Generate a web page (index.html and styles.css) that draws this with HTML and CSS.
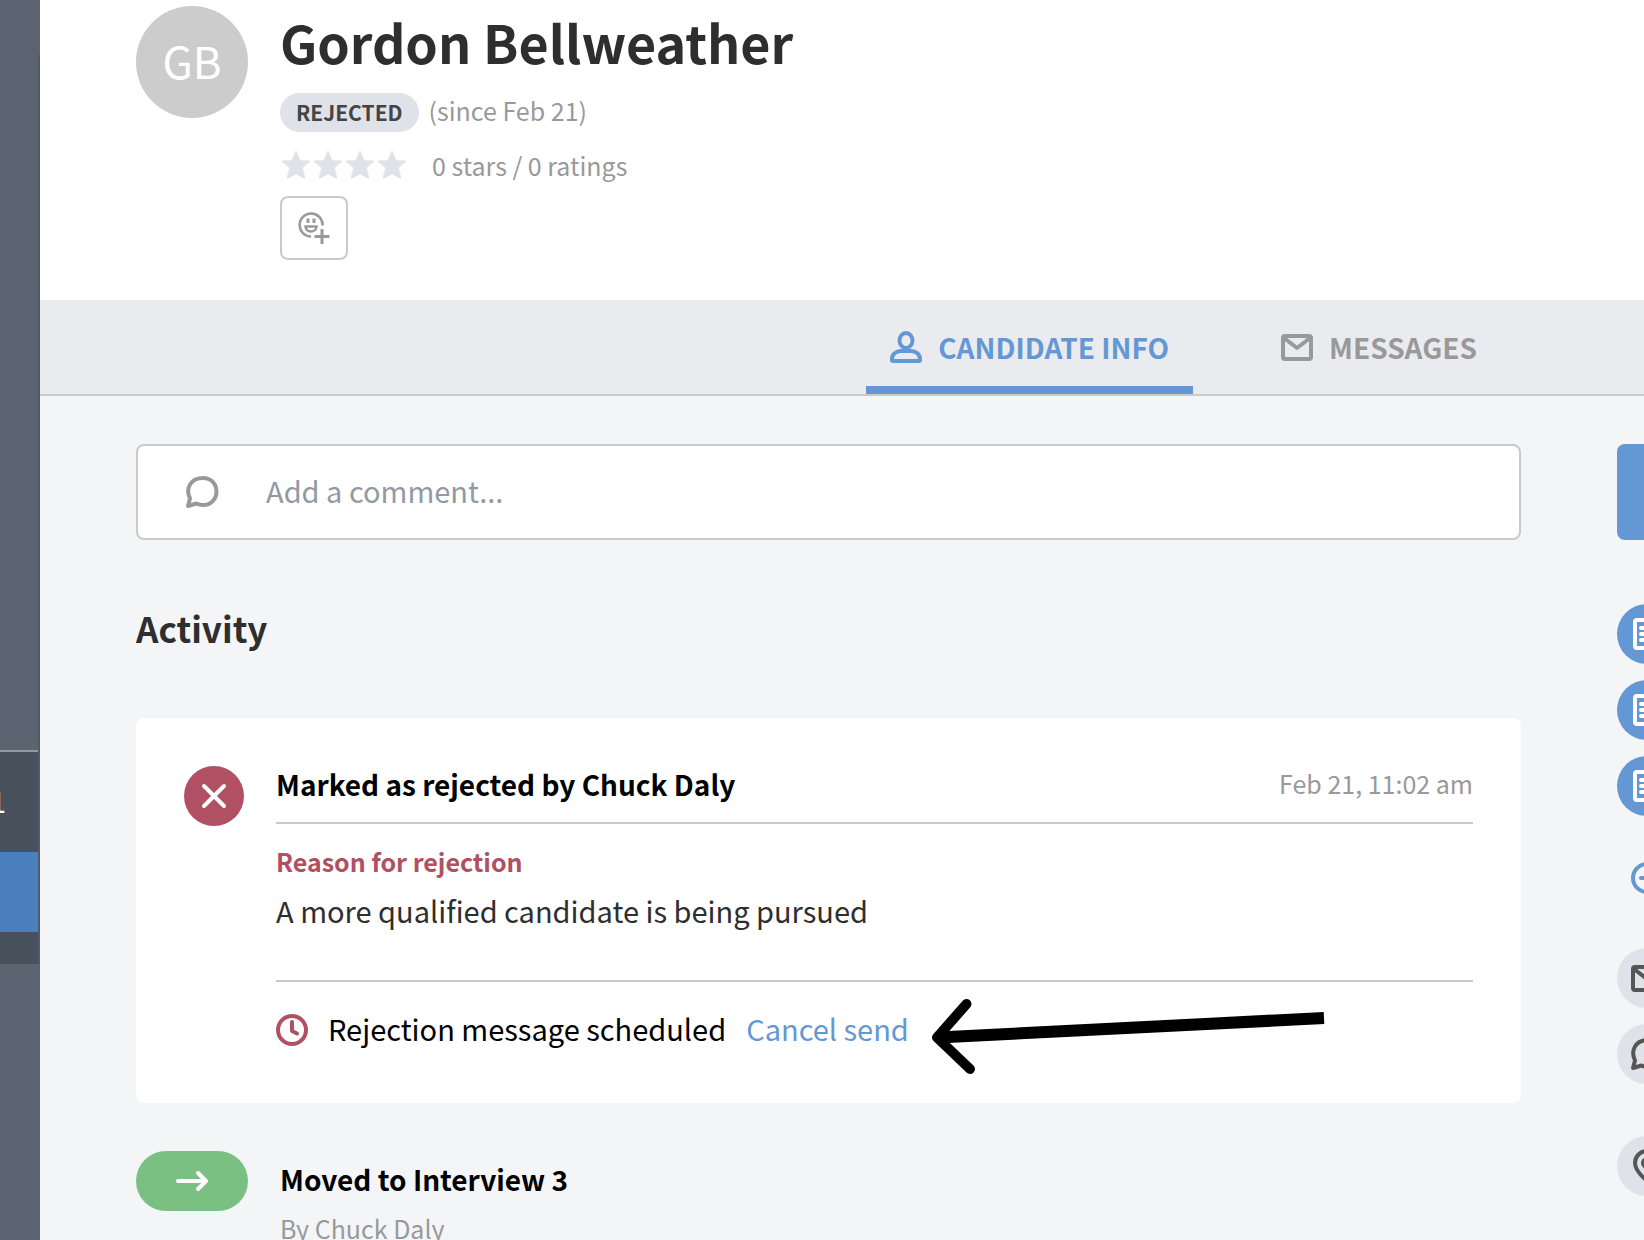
FILE: index.html
```html
<!DOCTYPE html>
<html lang="en">
	<head>
		<meta charset="UTF-8">
		<title>Gordon Bellweather</title>
		<link rel="stylesheet" href="styles.css">
	</head>
	<body>
		<div class="page">
			<div class="sidebar">
				<nav class="side-nav">
					<div class="side-menu">
						<div class="side-count">1</div>
						<div class="side-active"></div>
					</div>
				</nav>
			</div>
			<div class="main">
				<header class="profile">
					<div class="avatar">GB</div>
					<div class="profile-info">
						<h1 class="name">Gordon Bellweather</h1>
						<div class="status">
							<span class="badge">REJECTED</span>
							<span class="since">(since Feb 21)</span>
						</div>
						<div class="rating">
							<svg class="stars" width="128" height="32" viewBox="0 0 128 32">
								<defs>
									<path id="star" d="M15 1l4.200 10 10.800.8-8.200 7 2.600 11.200-9.400-4.500-9.400 4.500 2.600-11.200-8.200-7 10.800-.8z"/>
								</defs>
								<use href="#star" x="1"/>
								<use href="#star" x="33"/>
								<use href="#star" x="65"/>
								<use href="#star" x="97"/>
							</svg>
							<span>0 stars / 0 ratings</span>
						</div>
						<button class="react" type="button" aria-label="Add reaction">
							<svg width="32" height="32" viewBox="0 0 32 32" fill="none" stroke="currentColor" stroke-width="2.500">
								<path d="M24.600 13.500a11.500 11.500 0 1 0-11.500 11"/>
								<path d="M10 6.500v4.500M16 6.500v4.500" stroke-width="3"/>
								<path d="M7.500 14.500h11a5.500 5 0 0 1-11 0z"/>
								<path d="M24 17v15M16.500 24.500h15" stroke-width="3"/>
							</svg>
						</button>
					</div>
				</header>
				<nav class="tabs">
					<a class="tab active" href="#">
						<svg width="32" height="32" viewBox="0 0 32 32" fill="none" stroke="currentColor" stroke-width="4">
							<ellipse cx="16" cy="9.500" rx="6.500" ry="7.500"/>
							<path d="M11 20h10a9 8 0 0 1 9 8v1q0 1-1 1H3q-1 0-1-1v-1a9 8 0 0 1 9-8z"/>
						</svg>
						CANDIDATE INFO
					</a>
					<a class="tab" href="#">
						<svg width="32" height="32" viewBox="0 0 32 32" fill="none" stroke="currentColor" stroke-width="4" stroke-linejoin="round">
							<rect x="2" y="5" width="28" height="23" rx="2"/>
							<path d="M3 7l13 10 13-10"/>
						</svg>
						MESSAGES
					</a>
				</nav>
				<div class="columns">
					<div class="feed">
						<label class="comment">
							<svg width="32" height="32" viewBox="0 0 32 32" fill="none" stroke="currentColor" stroke-width="4" stroke-linejoin="round">
								<path d="M2 30l2-7.500C-1 12 5 2 17 2c8 0 13.500 6 13.500 13.500S25 29 17 29c-2.500 0-4.500-.5-6.500-1.500z"/>
							</svg>
							<input type="text" placeholder="Add a comment..." aria-label="Add a comment">
						</label>
						<h2 class="feed-title">Activity</h2>
						<div class="card">
							<div class="icon-reject">
								<svg width="24" height="24" viewBox="0 0 24 24" stroke="#fff" stroke-width="4" stroke-linecap="round">
									<path d="M2 2l20 20M22 2L2 22"/>
								</svg>
							</div>
							<div class="card-body">
								<div class="card-head">
									<h3 class="item-title">Marked as rejected by Chuck Daly</h3>
									<span class="date">Feb 21, 11:02 am</span>
								</div>
								<h4 class="reason-title">Reason for rejection</h4>
								<p class="reason">A more qualified candidate is being pursued</p>
								<div class="card-foot">
									<svg class="clock" width="32" height="32" viewBox="0 0 32 32" fill="none" stroke="currentColor" stroke-width="4">
										<circle cx="16" cy="16" r="14"/>
										<path d="M16 8v9l5 2.500" stroke-linecap="round" stroke-linejoin="round"/>
									</svg>
									<span>Rejection message scheduled</span>
									<a class="cancel" href="#">Cancel send</a>
									<svg class="pointer" width="400" height="80" viewBox="0 0 400 80" fill="none" stroke="#000" stroke-width="12">
										<path d="M392 20L6 39.500"/>
										<path d="M34.500 6L5 39.500l33 31.500" stroke-width="10" stroke-linecap="round" stroke-linejoin="round"/>
									</svg>
								</div>
							</div>
						</div>
						<div class="moved">
							<div class="icon-moved">
								<svg width="32" height="20" viewBox="0 0 32 20" fill="none" stroke="#fff" stroke-width="4" stroke-linecap="round" stroke-linejoin="round">
									<path d="M2 10h28M22 2l8 8-8 8"/>
								</svg>
							</div>
							<div>
								<h3 class="item-title">Moved to Interview 3</h3>
								<p class="by">By Chuck Daly</p>
							</div>
						</div>
					</div>
					<aside class="actions">
						<button class="primary" type="button" aria-label="Actions"></button>
						<div class="group">
							<button class="round blue" type="button" aria-label="Document 1">
								<svg width="32" height="32" viewBox="0 0 32 32" fill="none" stroke="currentColor" stroke-width="4">
									<rect x="4" y="2" width="24" height="28" rx="2"/>
									<path d="M10 10h12M10 16h12M10 22h12" stroke-linecap="round"/>
								</svg>
							</button>
							<button class="round blue" type="button" aria-label="Document 2">
								<svg width="32" height="32" viewBox="0 0 32 32" fill="none" stroke="currentColor" stroke-width="4">
									<rect x="4" y="2" width="24" height="28" rx="2"/>
									<path d="M10 10h12M10 16h12M10 22h12" stroke-linecap="round"/>
								</svg>
							</button>
							<button class="round blue" type="button" aria-label="Document 3">
								<svg width="32" height="32" viewBox="0 0 32 32" fill="none" stroke="currentColor" stroke-width="4">
									<rect x="4" y="2" width="24" height="28" rx="2"/>
									<path d="M10 10h12M10 16h12M10 22h12" stroke-linecap="round"/>
								</svg>
							</button>
						</div>
						<button class="round add" type="button" aria-label="Add document">
							<svg width="32" height="32" viewBox="0 0 32 32" fill="none" stroke="currentColor" stroke-width="4">
								<circle cx="16" cy="16" r="14"/>
								<path d="M10 16h12M16 10v12" stroke-linecap="round"/>
							</svg>
						</button>
						<div class="group">
							<button class="round" type="button" aria-label="Email">
								<svg width="32" height="32" viewBox="0 0 32 32" fill="none" stroke="currentColor" stroke-width="4" stroke-linejoin="round">
									<rect x="2" y="5" width="28" height="23" rx="2"/>
									<path d="M3 7l13 10 13-10"/>
								</svg>
							</button>
							<button class="round" type="button" aria-label="Text message">
								<svg width="32" height="32" viewBox="0 0 32 32" fill="none" stroke="currentColor" stroke-width="4" stroke-linejoin="round">
									<path d="M2 30l2-7.500C-1 12 5 2 17 2c8 0 13.500 6 13.500 13.500S25 29 17 29c-2.500 0-4.500-.5-6.500-1.500z"/>
								</svg>
							</button>
						</div>
						<button class="round place" type="button" aria-label="Location">
							<svg width="32" height="32" viewBox="0 0 32 32" fill="none" stroke="currentColor" stroke-width="4">
								<path d="M16 31C8 24 4 19 4 13a12 12 0 0 1 24 0c0 6-4 11-12 18z"/>
								<circle cx="16" cy="13" r="4"/>
							</svg>
						</button>
					</aside>
				</div>
			</div>
		</div>
	</body>
</html>
```
FILE: styles.css
```css
* {
	box-sizing: border-box;
}
body,h1,h2,h3,h4,p {
	margin: 0;
	padding: 0;
}
body {
	font-family: "Noto Sans CJK SC", "Noto Sans", sans-serif;
	font-size: 29px;
	line-height: 36px;
	color: #2e2e2e;
	background-color: #f3f5f7;
}
a {
	text-decoration: none;
}
button,input {
	font: inherit;
	border: none;
	padding: 0;
}
svg {
	display: block;
	flex: none;
	overflow: visible;
}
.page {
	display: flex;
	height: 100vh;
	overflow: hidden;
}

/* sidebar */
.sidebar {
	flex: none;
	width: 40px;
	padding-top: 54px;
	background-color: #5c6370;
}
.side-nav {
	padding-top: 696px;
	border-right: 2px solid #515a68;
}
.side-menu {
	padding-bottom: 32px;
	border-top: 2px solid #999;
	background-color: #47505b;
	overflow: hidden;
}
.side-count {
	display: flex;
	justify-content: flex-end;
	padding: 0 32px 4px 0;
	line-height: 96px;
	color: #fff;
}
.side-active {
	height: 80px;
	background-color: #4a80bd;
}

/* profile */
.main {
	flex: 1;
	min-width: 0;
}
.profile {
	display: flex;
	gap: 32px;
	padding: 6px 96px 40px;
	background-color: #fff;
}
.avatar {
	flex: none;
	width: 112px;
	height: 112px;
	border-radius: 50%;
	background-color: #ccc;
	color: #fff;
	font-size: 44px;
	line-height: 108px;
	text-align: center;
}
.profile-info {
	padding-top: 4px;
}
.name {
	font-size: 52px;
	line-height: 64px;
	font-weight: 600;
}
.status {
	display: flex;
	gap: 10px;
	margin-top: 19px;
	color: #999;
	font-size: 25px;
	line-height: 34px;
}
.badge {
	padding: 0 16px;
	border-radius: 20px;
	background-color: #dfe2e8;
	color: #444;
	font-size: 21px;
	line-height: 39px;
	font-weight: 600;
}
.rating {
	display: flex;
	align-items: center;
	gap: 24px;
	margin-top: 17px;
	color: #999;
	font-size: 25px;
	line-height: 32px;
}
.stars {
	fill: #dfe2e8;
}
.react {
	display: flex;
	align-items: center;
	justify-content: center;
	width: 68px;
	height: 64px;
	margin-top: 15px;
	border: 2px solid #c9c9c9;
	border-radius: 8px;
	background-color: #fff;
	color: #999;
}

/* tabs */
.tabs {
	display: flex;
	justify-content: flex-end;
	gap: 64px;
	height: 96px;
	padding-right: 143px;
	border-bottom: 2px solid #c9c9c9;
	background-color: #eaebef;
}
.tab {
	display: flex;
	align-items: center;
	gap: 16px;
	padding: 8px 24px 0;
	border-bottom: 8px solid transparent;
	color: #999;
	font-size: 28px;
	font-weight: 600;
}
.tab.active {
	border-color: #6398d4;
	color: #6398d4;
}

/* the action column runs past the right edge of the window */
.columns {
	display: grid;
	grid-template-columns: 1fr 480px;
	gap: 96px;
	padding: 48px 0 0 96px;
	margin-right: -453px;
}
.comment {
	display: flex;
	align-items: center;
	gap: 48px;
	height: 96px;
	padding: 0 48px;
	border: 2px solid #c9c9c9;
	border-radius: 8px;
	background-color: #fff;
	color: #999;
}
.comment input {
	flex: 1;
	padding-bottom: 4px;
	background: none;
	color: #2e2e2e;
}
.comment input::placeholder {
	color: #9299a5;
	opacity: 1;
}
.feed-title {
	margin: 64px 0 66px;
	font-size: 35px;
	line-height: 48px;
	font-weight: 600;
}
.card {
	display: flex;
	gap: 32px;
	padding: 48px 48px 57px;
	border-radius: 8px;
	background-color: #fff;
}
.icon-reject {
	display: flex;
	align-items: center;
	justify-content: center;
	flex: none;
	width: 60px;
	height: 60px;
	border-radius: 50%;
	background-color: #b15062;
}
.card-body {
	flex: 1;
}
.card-head {
	display: flex;
	justify-content: space-between;
	padding-bottom: 20px;
	border-bottom: 2px solid #c9c9c9;
}
.item-title {
	color: #000;
	font-size: 28px;
	font-weight: 600;
}
.date {
	color: #999;
	font-size: 25px;
	line-height: 34px;
}
.reason-title {
	margin-top: 20px;
	color: #b15062;
	font-size: 25px;
	line-height: 34px;
	font-weight: 700;
}
.reason {
	margin: 14px 0 52px;
}
.card-foot {
	position: relative;
	display: flex;
	align-items: flex-start;
	padding-top: 32px;
	border-top: 2px solid #c9c9c9;
	line-height: 28px;
	color: #000;
}
.clock {
	margin-right: 20px;
	color: #b15062;
}
.cancel {
	margin-left: 20px;
	color: #6398d4;
}
.pointer {
	position: absolute;
	left: 656px;
	top: 16px;
}
.moved {
	display: flex;
	gap: 32px;
	margin-top: 48px;
}
.moved .item-title {
	line-height: 56px;
}
.icon-moved {
	display: flex;
	align-items: center;
	justify-content: center;
	flex: none;
	width: 112px;
	height: 60px;
	border-radius: 30px;
	background-color: #7ac083;
}
.by {
	margin-top: 3px;
	color: #999;
	font-size: 25px;
}

/* actions */
.primary {
	display: block;
	width: 100%;
	height: 96px;
	margin-bottom: 64px;
	border-radius: 8px;
	background-color: #6398d4;
}
.group {
	display: flex;
	flex-direction: column;
	gap: 16px;
}
.round {
	display: flex;
	align-items: center;
	justify-content: center;
	width: 60px;
	height: 60px;
	border-radius: 50%;
	background-color: #dfe2e8;
	color: #555;
}
.round.blue {
	background-color: #6398d4;
	color: #fff;
}
.round.add {
	margin: 32px 0 40px;
	background: none;
	color: #6398d4;
}
.round.place {
	margin-top: 52px;
}
```
